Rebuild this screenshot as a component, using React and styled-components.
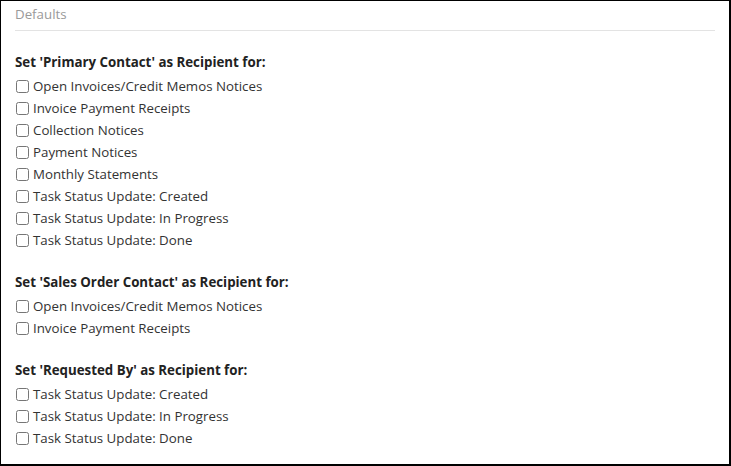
import React from "react";
import styled, { createGlobalStyle } from "styled-components";

const Global = createGlobalStyle`
  html, body { margin: 0; padding: 0; background: #fff; }
  body { font-family: "Open Sans", "Noto Sans", sans-serif; }
`;

const Frame = styled.div`
  box-sizing: border-box;
  width: 731px;
  height: 466px;
  border-style: solid;
  border-color: #000;
  border-width: 1px 2px 2px 1px;
  padding: 0 14px 0 14px;
  background: #fff;
`;

const Title = styled.div`
  font-size: 13.3px;
  color: #9a9a9a;
  height: 29px;
  line-height: 26px;
  border-bottom: 1px solid #e3e3e3;
`;

const Section = styled.section`
  margin-top: ${(p) => p.$top}px;
`;

const Heading = styled.div`
  font-size: 13.3px;
  font-weight: 700;
  color: #222;
  line-height: 20px;
  margin-bottom: 3px;
`;

const Row = styled.label`
  display: flex;
  align-items: center;
  height: 22px;
  font-size: 13.3px;
  color: #333;
`;

const Box = styled.input.attrs({ type: "checkbox" })`
  width: 13px;
  height: 13px;
  margin: 0 4px 0 1px;
`;

const sections = [
  {
    top: 21,
    title: "Set 'Primary Contact' as Recipient for:",
    items: [
      "Open Invoices/Credit Memos Notices",
      "Invoice Payment Receipts",
      "Collection Notices",
      "Payment Notices",
      "Monthly Statements",
      "Task Status Update: Created",
      "Task Status Update: In Progress",
      "Task Status Update: Done",
    ],
  },
  {
    top: 21,
    title: "Set 'Sales Order Contact' as Recipient for:",
    items: ["Open Invoices/Credit Memos Notices", "Invoice Payment Receipts"],
  },
  {
    top: 21,
    title: "Set 'Requested By' as Recipient for:",
    items: [
      "Task Status Update: Created",
      "Task Status Update: In Progress",
      "Task Status Update: Done",
    ],
  },
];

export default function App() {
  return (
    <>
      <Global />
      <Frame>
        <Title>Defaults</Title>
        {sections.map((s) => (
          <Section key={s.title} $top={s.top}>
            <Heading>{s.title}</Heading>
            {s.items.map((it) => (
              <Row key={it}>
                <Box />
                {it}
              </Row>
            ))}
          </Section>
        ))}
      </Frame>
    </>
  );
}
